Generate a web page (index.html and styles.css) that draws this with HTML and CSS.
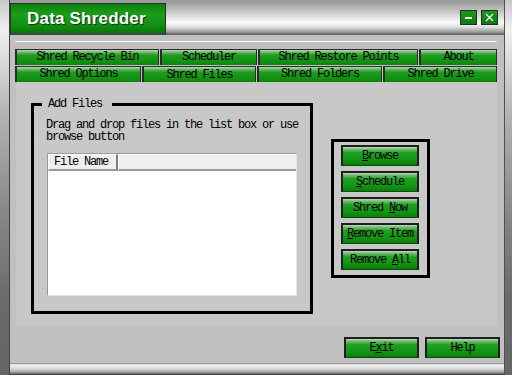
FILE: index.html
```html
<!DOCTYPE html>
<html lang="en">
<head>
    <meta charset="UTF-8">
    <meta name="viewport" content="width=device-width, initial-scale=1.0">
    <title>Data Shredder</title>
    <link rel="stylesheet" href="styles.css">
</head>
<body>

    <div class="window">
        <div class="edge edge-left"></div>

        <div class="main">
            <!-- title bar -->
            <div class="titlebar">
                <div class="title">Data Shredder</div>
                <div class="title-fill">
                    <button class="sys-btn" title="Minimize">
                        <svg width="9" height="9" viewBox="0 0 9 9"><rect x="1" y="4" width="7" height="2" fill="#fff"/></svg>
                    </button>
                    <button class="sys-btn" title="Close">
                        <svg width="9" height="9" viewBox="0 0 9 9"><path d="M1 1 L8 8 M8 1 L1 8" stroke="#fff" stroke-width="1.2"/></svg>
                    </button>
                </div>
            </div>

            <div class="body">
                <div class="rule"></div>

                <!-- tabs -->
                <div class="tabs">
                    <div class="tab-row">
                        <div class="tab" style="width: 144px">Shred Recycle Bin</div>
                        <div class="tab" style="width: 97px">Scheduler</div>
                        <div class="tab" style="width: 160px">Shred Restore Points</div>
                        <div class="tab" style="width: 78px">About</div>
                    </div>
                    <div class="tab-row">
                        <div class="tab" style="width: 126px">Shred Options</div>
                        <div class="tab active" style="width: 114px">Shred Files</div>
                        <div class="tab" style="width: 125px">Shred Folders</div>
                        <div class="tab" style="width: 114px">Shred Drive</div>
                    </div>
                </div>

                <!-- Shred Files page -->
                <div class="panel">
                    <fieldset class="group">
                        <legend>Add Files</legend>
                        <p class="hint">Drag and drop files in the list box or use browse button</p>
                        <div class="listview">
                            <div class="lv-head">
                                <span class="lv-col">File Name</span>
                                <span class="lv-col lv-rest"></span>
                            </div>
                        </div>
                    </fieldset>

                    <div class="actions">
                        <button class="gbtn"><u>B</u>rowse</button>
                        <button class="gbtn"><u>S</u>chedule</button>
                        <button class="gbtn">Shred <u>N</u>ow</button>
                        <button class="gbtn"><u>R</u>emove Item</button>
                        <button class="gbtn">Remove <u>A</u>ll</button>
                    </div>
                </div>

                <div class="footer">
                    <button class="gbtn wide">E<u>x</u>it</button>
                    <button class="gbtn wide">Help</button>
                </div>
            </div>

            <div class="bottombar"></div>
        </div>

        <div class="edge edge-right"></div>
    </div>

</body>
</html>
```

FILE: styles.css
```css
* { box-sizing: border-box; }
body {
    margin: 0;
    background: #fff;
    font-family: "Liberation Mono", "DejaVu Sans Mono", monospace;
    font-size: 12px;
    letter-spacing: -1.2px;
    color: #000;
}
.window {
    display: flex;
    width: 512px;
    height: 375px;
}
.edge {
    background: linear-gradient(#c8c8c8 0, #f0f0f0 8%, #b4b4b4 30%, #8a8a8a 55%, #6a6a6a 80%, #666 100%);
}
.edge-left { width: 10px; border-right: 1px solid #404040; }
.edge-right { width: 8px; border-left: 1px solid #505050; }
.main {
    width: 494px;
    display: flex;
    flex-direction: column;
}

/* title bar */
.titlebar {
    display: flex;
    height: 35px;
    border-top: 3px solid #9c9c9c;
}
.title {
    width: 156px;
    background: linear-gradient(#0e7f0e 0, #1b9d1b 35%, #129212 70%, #0a760a 100%);
    border: 1px solid #1d3a1d;
    border-bottom: 2px solid #3c4a3c;
    color: #fff;
    font-family: "Liberation Sans", Arial, sans-serif;
    font-weight: bold;
    font-size: 17px;
    letter-spacing: 0.2px;
    padding: 5px 0 0 16px;
    text-shadow: 1px 1px 1px #0a300a;
}
.title-fill {
    flex: 1;
    display: flex;
    justify-content: flex-end;
    align-items: flex-start;
    gap: 4px;
    padding: 7px 6px 0 0;
    background: linear-gradient(#a0a0a0 0, #c8c8c8 30%, #fafafa 65%, #e0e0e0 80%, #8c8c8c 100%);
    border-bottom: 2px solid #6e6e6e;
}
.sys-btn {
    width: 17px;
    height: 15px;
    padding: 0;
    display: flex;
    align-items: center;
    justify-content: center;
    background: linear-gradient(#1a9a1a, #0c7a0c);
    border: 1px solid #2a2a2a;
}

/* body */
.body {
    flex: 1;
    background: #c0c0c0;
    padding: 0 7px 0 5px;
}
.rule {
    margin-top: 6px;
    height: 1px;
    background: #fff;
}
.tabs {
    margin-top: 7px;
    display: flex;
    flex-direction: column;
    gap: 1px;
}
.tab-row {
    display: flex;
    gap: 1px;
}
.tab {
    height: 16px;
    text-align: center;
    line-height: 15px;
    background: linear-gradient(#c0d4c0 0, #6cb86c 15%, #1d9c1d 35%, #129212 75%, #0c840c 100%);
    border-top: 1px solid #2a2a2a;
    border-left: 2px solid #2a2a2a;
    border-right: 1px solid #2a2a2a;
}
.tab.active { line-height: 17px; }

.panel {
    margin-left: 1px;
    height: 244px;
    background: #c8c8c8;
    padding: 15px 0 0 15px;
    display: flex;
    align-items: flex-start;
    gap: 18px;
}
.group {
    width: 282px;
    height: 217px;
    margin: 0;
    padding: 0 10px 0 12px;
    border: 3px solid #000;
}
.group legend {
    margin-left: -4px;
    padding: 0 10px 0 6px;
    line-height: 14px;
}
.hint {
    margin: 8px 0 0;
    line-height: 12px;
}
.listview {
    margin: 10px 0 0 1px;
    width: 250px;
    height: 143px;
    background: #fff;
    border-top: 1px solid #9a9a9a;
    border-left: 1px solid #9a9a9a;
    border-right: 1px solid #e4e4e4;
    border-bottom: 1px solid #e4e4e4;
}
.lv-head {
    display: flex;
    height: 17px;
}
.lv-col {
    width: 70px;
    padding-left: 5px;
    line-height: 14px;
    background: #efefef;
    border-top: 1px solid #fff;
    border-left: 1px solid #fff;
    border-right: 2px solid #808080;
    border-bottom: 2px solid #9a9a9a;
}
.lv-rest { flex: 1; border-right: 0; }

.actions {
    margin-top: 42px;
    width: 99px;
    height: 139px;
    border: 3px solid #000;
    padding: 3px 0 0 7px;
    display: flex;
    flex-direction: column;
    gap: 5px;
}
.gbtn {
    width: 78px;
    height: 21px;
    padding: 0;
    font: inherit;
    letter-spacing: inherit;
    color: #000;
    background: linear-gradient(#c4d6c4 0, #74bc74 12%, #20a020 32%, #159515 70%, #0e880e 88%, #0a7a0a 100%);
    border: 2px solid #1e1e1e;
    border-bottom: 1px solid #0a4a0a;
}
.footer {
    margin: 11px -3px 0 0;
    display: flex;
    justify-content: flex-end;
    gap: 6px;
}
.gbtn.wide { width: 75px; }

.bottombar {
    height: 12px;
    background: linear-gradient(#7a7a7a 0, #f4f4f4 15%, #dcdcdc 45%, #a8a8a8 75%, #5a5a5a 92%, #303030 100%);
}
```
